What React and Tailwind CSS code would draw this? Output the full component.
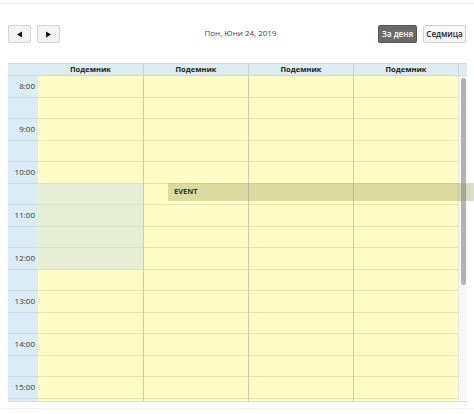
import React from "react";

const times = ["8:00","9:00","10:00","11:00","12:00","13:00","14:00","15:00"];

export default function App() {
  const rows = Array.from({ length: 16 }, (_, i) => i);
  return (
    <div className="w-[474px] h-[414px] bg-white overflow-hidden relative" style={{ fontFamily: '"Open Sans", "Noto Sans", sans-serif' }}>
      <div className="h-[4px] border-b border-[#f1f1f1]" />
      <div className="mt-[21px] px-[8px] flex items-center h-[18px] relative">
        <div className="flex gap-[6px]">
          <button className="w-[23px] h-[18px] bg-[#f3f3f3] border border-[#d4d4d4] rounded-[2px] flex items-center justify-center">
            <svg width="7" height="7" viewBox="0 0 7 7"><path d="M6 0.5 L1 3.5 L6 6.5 Z" fill="#111" /></svg>
          </button>
          <button className="w-[23px] h-[18px] bg-[#f3f3f3] border border-[#d4d4d4] rounded-[2px] flex items-center justify-center">
            <svg width="7" height="7" viewBox="0 0 7 7"><path d="M1 0.5 L6 3.5 L1 6.5 Z" fill="#111" /></svg>
          </button>
        </div>
        <div className="flex-1 text-center text-[8px] text-[#444] pl-[43px] pb-[3px] leading-none">Пон, Юни 24, 2019</div>
        <div className="flex gap-[6px]">
          <button className="w-[39px] h-[18px] bg-[#6a6a6a] border border-[#555] rounded-[2px] text-white text-[8px] font-semibold leading-none">За деня</button>
          <button className="w-[43px] h-[18px] bg-[#f6f6f6] border border-[#d0d0d0] rounded-[2px] text-[#222] text-[8px] font-semibold leading-none">Седмица</button>
        </div>
      </div>

      <div className="ml-[8px] mt-[20px] w-[459px] relative">
        <div className="flex h-[13px] bg-[#dcedf1] border-t border-b border-[#c9dbe0]">
          <div className="w-[30px]" />
          {[0, 1, 2, 3].map((c) => (
            <div key={c} className={`w-[105px] ${c === 0 ? "" : "border-l border-[#c5d3d6]"} text-[7.5px] font-bold text-[#222] flex items-center justify-center leading-none`}>Подемник</div>
          ))}
          <div className="w-[9px] border-l border-[#c5d3d6]" />
        </div>
        <div className="h-[326px] overflow-hidden flex border-b border-[#ddd]">
          <div className="w-[30px] bg-[#daedf4] shrink-0">
            {rows.map((r) => (
              <div key={r} className="h-[21.5px] border-b border-[#c8dce2] flex items-center justify-end pr-[3px] text-[8px] text-[#333] leading-none">
                {r % 2 === 0 ? times[r / 2] : ""}
              </div>
            ))}
          </div>
          {[0, 1, 2, 3].map((c) => (
            <div key={c} className={`w-[105px] shrink-0 ${c === 0 ? "" : "border-l border-[#cfcbb0]"}`}>
              {rows.map((r) => (
                <div key={r} className={`h-[21.5px] border-b ${c === 0 && r >= 5 && r <= 8 ? "bg-[#e6efd5] border-[#dbe2c8]" : "bg-[#fffcc5] border-[#e8e3b2]"}`} />
              ))}
            </div>
          ))}
          <div className="w-[9px] bg-[#f7f7f7] relative border-l border-[#e5e5e5]">
            <div className="absolute left-[2px] top-[2px] w-[5px] h-[207px] rounded-[3px] bg-[#b3b3b3]" />
          </div>
        </div>
        <div className="absolute left-[160px] top-[120px] w-[320px] h-[18px] bg-[rgba(150,145,80,0.32)] flex items-center pl-[6px] text-[7.5px] font-bold text-[#333] leading-none">EVENT</div>
      </div>
      <div className="mt-[6px] border-t border-[#f3f3f3]" />
    </div>
  );
}
